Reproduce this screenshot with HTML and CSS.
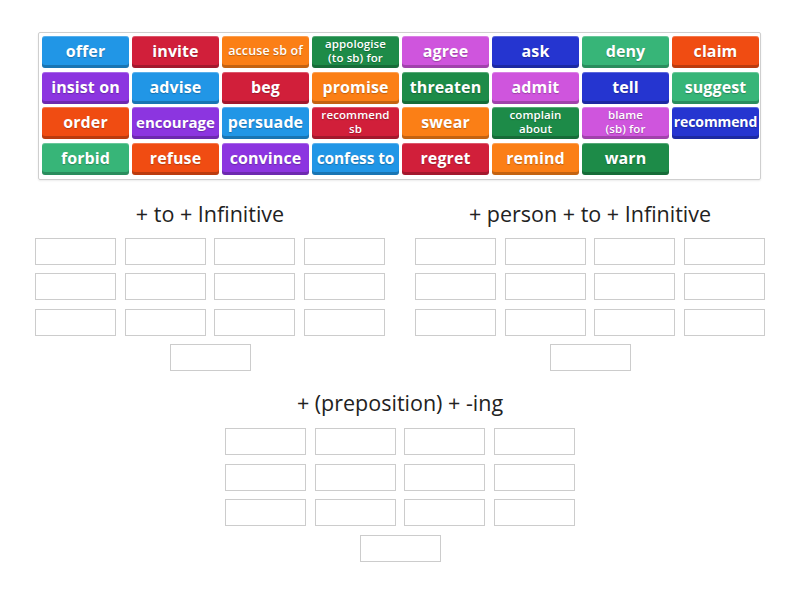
FILE: index.html
```html
<!DOCTYPE html>
<html>
<head>
<meta charset="utf-8">
<link rel="stylesheet" href="styles.css">
</head>
<body>
<div class="page">
  <div class="bank">
    <div class="tile c-blue">offer</div>
    <div class="tile c-red">invite</div>
    <div class="tile c-orange mid">accuse sb of</div>
    <div class="tile c-green small">appologise<br>(to sb) for</div>
    <div class="tile c-pink">agree</div>
    <div class="tile c-navy">ask</div>
    <div class="tile c-mint">deny</div>
    <div class="tile c-vermil">claim</div>

    <div class="tile c-purple">insist on</div>
    <div class="tile c-blue">advise</div>
    <div class="tile c-red">beg</div>
    <div class="tile c-orange">promise</div>
    <div class="tile c-green">threaten</div>
    <div class="tile c-pink">admit</div>
    <div class="tile c-navy">tell</div>
    <div class="tile c-mint">suggest</div>

    <div class="tile c-vermil">order</div>
    <div class="tile c-purple tight">encourage</div>
    <div class="tile c-blue">persuade</div>
    <div class="tile c-red small">recommend<br>sb</div>
    <div class="tile c-orange">swear</div>
    <div class="tile c-green small">complain<br>about</div>
    <div class="tile c-pink small">blame<br>(sb) for</div>
    <div class="tile c-navy tighter">recommend</div>

    <div class="tile c-mint">forbid</div>
    <div class="tile c-vermil">refuse</div>
    <div class="tile c-purple">convince</div>
    <div class="tile c-blue tight2">confess to</div>
    <div class="tile c-red">regret</div>
    <div class="tile c-orange">remind</div>
    <div class="tile c-green">warn</div>
  </div>

  <div class="groups">
    <div class="group">
      <h2 class="title">+ to + Infinitive</h2>
      <div class="slots">
        <div class="slot"></div><div class="slot"></div><div class="slot"></div><div class="slot"></div>
        <div class="slot"></div><div class="slot"></div><div class="slot"></div><div class="slot"></div>
        <div class="slot"></div><div class="slot"></div><div class="slot"></div><div class="slot"></div>
      </div>
      <div class="slot single"></div>
    </div>
    <div class="group">
      <h2 class="title">+ person + to + Infinitive</h2>
      <div class="slots">
        <div class="slot"></div><div class="slot"></div><div class="slot"></div><div class="slot"></div>
        <div class="slot"></div><div class="slot"></div><div class="slot"></div><div class="slot"></div>
        <div class="slot"></div><div class="slot"></div><div class="slot"></div><div class="slot"></div>
      </div>
      <div class="slot single"></div>
    </div>
  </div>
  <div class="groups bottom">
    <div class="group">
      <h2 class="title">+ (preposition) + -ing</h2>
      <div class="slots">
        <div class="slot"></div><div class="slot"></div><div class="slot"></div><div class="slot"></div>
        <div class="slot"></div><div class="slot"></div><div class="slot"></div><div class="slot"></div>
        <div class="slot"></div><div class="slot"></div><div class="slot"></div><div class="slot"></div>
      </div>
      <div class="slot single"></div>
    </div>
  </div>
</div>
</body>
</html>
```
FILE: styles.css
```css
html, body {
  margin: 0;
  padding: 0;
  background: #ffffff;
}
body {
  font-family: "Open Sans", "Liberation Sans", sans-serif;
}
.page {
  width: 800px;
  height: 600px;
  padding-top: 32px;
  box-sizing: border-box;
}
.bank {
  margin: 0 39px 0 38px;
  border: 1px solid #cfcfcf;
  border-radius: 2px;
  padding: 3px 2px 4px 3px;
  display: grid;
  grid-template-columns: repeat(8, 87px);
  grid-auto-rows: 32px;
  column-gap: 3px;
  row-gap: 3.5px;
  box-shadow: 0 1px 2px rgba(0,0,0,0.08);
}
.tile {
  border-radius: 3px;
  color: #ffffff;
  font-weight: 700;
  font-size: 16px;
  line-height: 18px;
  display: flex;
  align-items: center;
  justify-content: center;
  text-align: center;
  white-space: nowrap;
  overflow: hidden;
  padding-bottom: 2px;
  box-sizing: border-box;
  text-shadow: 0 1px 1px rgba(0,0,0,0.25);
  box-shadow: inset 0 -3px 0 rgba(0,0,0,0.22), inset 0 1px 0 rgba(255,255,255,0.25);
  letter-spacing: 0.1px;
}
.tile.tight {
  font-size: 15px;
  letter-spacing: 0;
}
.tile.tighter {
  font-size: 14px;
  letter-spacing: -0.1px;
}
.tile.tight2 {
  font-size: 15.5px;
  letter-spacing: -0.1px;
}
.tile.mid {
  font-size: 12.5px;
  font-weight: 600;
}
.tile.small {
  font-size: 11.5px;
  line-height: 13.5px;
  font-weight: 600;
  padding-bottom: 3px;
}
.c-blue { background: #2196e6; }
.c-red { background: #d11f3a; }
.c-orange { background: #fb7f16; }
.c-green { background: #1d8b48; }
.c-pink { background: #cf55dd; }
.c-navy { background: #2535d0; }
.c-mint { background: #37b578; }
.c-vermil { background: #f04c12; }
.c-purple { background: #8c35e0; }

.groups {
  display: flex;
  padding: 0 20px;
}
.group {
  flex: 1;
  display: flex;
  flex-direction: column;
  align-items: center;
}
.title {
  margin: 0;
  font-weight: 400;
  font-size: 21.5px;
  line-height: 30px;
  color: #222222;
  padding-top: 19px;
  padding-bottom: 9px;
}
.slots {
  display: grid;
  grid-template-columns: repeat(4, 81px);
  grid-auto-rows: 27px;
  column-gap: 8.7px;
  row-gap: 8.5px;
}
.slot {
  border: 1px solid #cccccc;
  box-sizing: border-box;
  background: #ffffff;
}
.slot.single {
  width: 81px;
  height: 27px;
  margin-top: 8.5px;
}
.bottom .title {
  padding-top: 17px;
  padding-bottom: 10px;
}
```
